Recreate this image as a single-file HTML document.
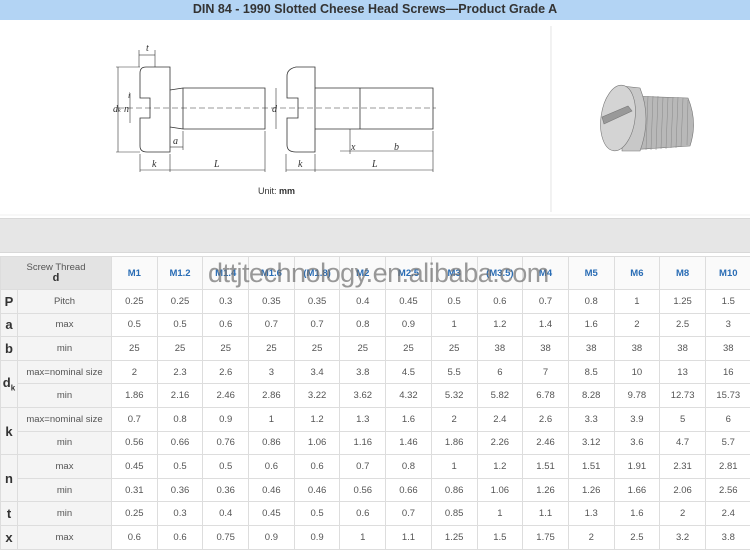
<!DOCTYPE html>
<html><head><meta charset="utf-8"><style>
*{margin:0;padding:0;box-sizing:border-box}
body{width:750px;height:551px;overflow:hidden;background:#fff;font-family:"Liberation Sans",Arial,sans-serif;position:relative}
.title{position:absolute;left:0;top:0;width:750px;height:20px;background:#b3d4f4;text-align:center;font-weight:bold;font-size:12.5px;line-height:19px;color:#333;z-index:2}
.band{position:absolute;left:0;top:218px;width:750px;height:35px;background:#e6e6e6;border-top:1px solid #d8d8d8;border-bottom:1px solid #d8d8d8}
table{position:absolute;left:0;top:256px;border-collapse:collapse;table-layout:fixed;width:751px}
td{border:1px solid #ddd;text-align:center;font-size:9.5px;color:#555;height:23.6px;padding:0}
td.l{background:#f4f4f4}
td.s{font-weight:bold;font-size:13px;color:#333}
tr.h td{height:33px;background:#fafafa}
tr.h td.m{color:#2a6db5;font-weight:bold;font-size:9.5px}
.wm{position:absolute;left:208px;top:258px;font-size:27px;color:rgba(110,110,110,0.7);letter-spacing:-0.5px;z-index:3;white-space:nowrap}
</style></head><body>
<div class="title">DIN 84 - 1990 Slotted Cheese Head Screws—Product Grade A</div>
<svg style="position:absolute;left:0;top:0" width="750" height="218" viewBox="0 0 750 218" font-family="Liberation Serif,serif" font-style="italic" font-size="10" fill="none" stroke="#333" stroke-width="0.8">
<line x1="551" y1="26" x2="551" y2="212" stroke="#ddd"/>
<line x1="0" y1="215" x2="750" y2="215" stroke="#eee"/>
<path d="M146 67 Q140 67 140 73 L140 98 L150 98 L150 118 L140 118 L140 146 Q140 152 147 152 L170 152 L170 67 Z"/>
<path d="M170 90 L183 88 L265 88 L265 129 L183 129 L170 127"/>
<line x1="183" y1="88" x2="183" y2="129"/>
<line x1="118" y1="108" x2="436" y2="108" stroke-dasharray="6 3" stroke-width="0.6"/>
<path d="M296 67 Q287 69 287 76 L287 98 L298 98 L298 118 L287 118 L287 145 Q287 152 296 152 L315 152 L315 67 Z"/>
<path d="M315 88 L433 88 L433 129 L315 129"/>
<line x1="360" y1="88" x2="360" y2="129"/>
<g stroke-width="0.6">
<line x1="118" y1="67" x2="118" y2="152"/><line x1="116" y1="67" x2="140" y2="67"/><line x1="116" y1="152" x2="140" y2="152"/>
<line x1="139" y1="50" x2="139" y2="67"/><line x1="155" y1="50" x2="155" y2="67"/><line x1="139" y1="55" x2="155" y2="55"/>
<line x1="140" y1="154" x2="140" y2="172"/><line x1="170" y1="154" x2="170" y2="172"/><line x1="265" y1="131" x2="265" y2="172"/>
<line x1="140" y1="170" x2="265" y2="170"/>
<line x1="276" y1="88" x2="276" y2="129"/>
<line x1="286" y1="154" x2="286" y2="172"/><line x1="315" y1="154" x2="315" y2="172"/><line x1="433" y1="131" x2="433" y2="172"/>
<line x1="286" y1="170" x2="433" y2="170"/>
<line x1="340" y1="151" x2="433" y2="151"/><line x1="350" y1="129" x2="350" y2="154"/>
<line x1="170" y1="147" x2="183" y2="147"/><line x1="183" y1="131" x2="183" y2="150"/>
<line x1="130" y1="93" x2="130" y2="123"/>
</g>
<g fill="#333" stroke="none">
<text x="146" y="51">t</text><text x="113" y="112">d<tspan font-size="6">k</tspan></text><text x="124" y="112">n</text>
<text x="128" y="98" font-size="8">i</text>
<text x="173" y="144">a</text><text x="152" y="167">k</text><text x="214" y="167">L</text>
<text x="272" y="112">d</text><text x="298" y="167">k</text><text x="372" y="167">L</text>
<text x="351" y="150">x</text><text x="394" y="150">b</text>
<text x="258" y="194" font-style="normal" font-family="Liberation Sans,sans-serif" font-size="9">Unit: <tspan font-weight="bold">mm</tspan></text>
</g>
<g stroke="#777" stroke-width="0.6">
<path d="M628 96 L688 98 Q698 122 690 146 L628 150 Z" fill="#b8b8b8"/>
<path d="M622 86 L640 88 Q652 118 640 151 L622 151 Z" fill="#c8c8c8"/>
<ellipse cx="618" cy="118" rx="17" ry="33" fill="#d4d4d4" transform="rotate(8 618 118)"/>
<path d="M602 117 L628 106 L632 111 L604 124 Z" fill="#999"/>
</g>
<g stroke="#888" stroke-width="0.5">
<line x1="648" y1="96" x2="646" y2="150"/><line x1="653" y1="96" x2="651" y2="150"/><line x1="658" y1="96" x2="656" y2="150"/><line x1="663" y1="97" x2="661" y2="149"/><line x1="668" y1="97" x2="666" y2="149"/><line x1="673" y1="97" x2="671" y2="148"/><line x1="678" y1="97" x2="676" y2="148"/><line x1="683" y1="98" x2="681" y2="147"/><line x1="688" y1="100" x2="687" y2="145"/>
</g>
</svg>
<div class="band"></div>
<div class="wm">dttjtechnology.en.alibaba.com</div>
<table>
<colgroup><col style="width:17px"><col style="width:94px"><col span="14" style="width:45.7px"></colgroup>
<tr class="h"><td colspan="2" style="background:#e3e3e3;line-height:11px">Screw Thread<br><b style="font-size:11px;color:#333">d</b></td><td class="m">M1</td><td class="m">M1.2</td><td class="m">M1.4</td><td class="m">M1.6</td><td class="m">(M1.8)</td><td class="m">M2</td><td class="m">M2.5</td><td class="m">M3</td><td class="m">(M3.5)</td><td class="m">M4</td><td class="m">M5</td><td class="m">M6</td><td class="m">M8</td><td class="m">M10</td></tr>
<tr><td class="l s">P</td><td class="l">Pitch</td><td>0.25</td><td>0.25</td><td>0.3</td><td>0.35</td><td>0.35</td><td>0.4</td><td>0.45</td><td>0.5</td><td>0.6</td><td>0.7</td><td>0.8</td><td>1</td><td>1.25</td><td>1.5</td></tr>
<tr><td class="l s">a</td><td class="l">max</td><td>0.5</td><td>0.5</td><td>0.6</td><td>0.7</td><td>0.7</td><td>0.8</td><td>0.9</td><td>1</td><td>1.2</td><td>1.4</td><td>1.6</td><td>2</td><td>2.5</td><td>3</td></tr>
<tr><td class="l s">b</td><td class="l">min</td><td>25</td><td>25</td><td>25</td><td>25</td><td>25</td><td>25</td><td>25</td><td>25</td><td>38</td><td>38</td><td>38</td><td>38</td><td>38</td><td>38</td></tr>
<tr><td class="l s" rowspan="2">d<sub style="font-size:8px">k</sub></td><td class="l">max=nominal size</td><td>2</td><td>2.3</td><td>2.6</td><td>3</td><td>3.4</td><td>3.8</td><td>4.5</td><td>5.5</td><td>6</td><td>7</td><td>8.5</td><td>10</td><td>13</td><td>16</td></tr>
<tr><td class="l">min</td><td>1.86</td><td>2.16</td><td>2.46</td><td>2.86</td><td>3.22</td><td>3.62</td><td>4.32</td><td>5.32</td><td>5.82</td><td>6.78</td><td>8.28</td><td>9.78</td><td>12.73</td><td>15.73</td></tr>
<tr><td class="l s" rowspan="2">k</td><td class="l">max=nominal size</td><td>0.7</td><td>0.8</td><td>0.9</td><td>1</td><td>1.2</td><td>1.3</td><td>1.6</td><td>2</td><td>2.4</td><td>2.6</td><td>3.3</td><td>3.9</td><td>5</td><td>6</td></tr>
<tr><td class="l">min</td><td>0.56</td><td>0.66</td><td>0.76</td><td>0.86</td><td>1.06</td><td>1.16</td><td>1.46</td><td>1.86</td><td>2.26</td><td>2.46</td><td>3.12</td><td>3.6</td><td>4.7</td><td>5.7</td></tr>
<tr><td class="l s" rowspan="2">n</td><td class="l">max</td><td>0.45</td><td>0.5</td><td>0.5</td><td>0.6</td><td>0.6</td><td>0.7</td><td>0.8</td><td>1</td><td>1.2</td><td>1.51</td><td>1.51</td><td>1.91</td><td>2.31</td><td>2.81</td></tr>
<tr><td class="l">min</td><td>0.31</td><td>0.36</td><td>0.36</td><td>0.46</td><td>0.46</td><td>0.56</td><td>0.66</td><td>0.86</td><td>1.06</td><td>1.26</td><td>1.26</td><td>1.66</td><td>2.06</td><td>2.56</td></tr>
<tr><td class="l s">t</td><td class="l">min</td><td>0.25</td><td>0.3</td><td>0.4</td><td>0.45</td><td>0.5</td><td>0.6</td><td>0.7</td><td>0.85</td><td>1</td><td>1.1</td><td>1.3</td><td>1.6</td><td>2</td><td>2.4</td></tr>
<tr><td class="l s">x</td><td class="l">max</td><td>0.6</td><td>0.6</td><td>0.75</td><td>0.9</td><td>0.9</td><td>1</td><td>1.1</td><td>1.25</td><td>1.5</td><td>1.75</td><td>2</td><td>2.5</td><td>3.2</td><td>3.8</td></tr>
</table>
</body></html>
